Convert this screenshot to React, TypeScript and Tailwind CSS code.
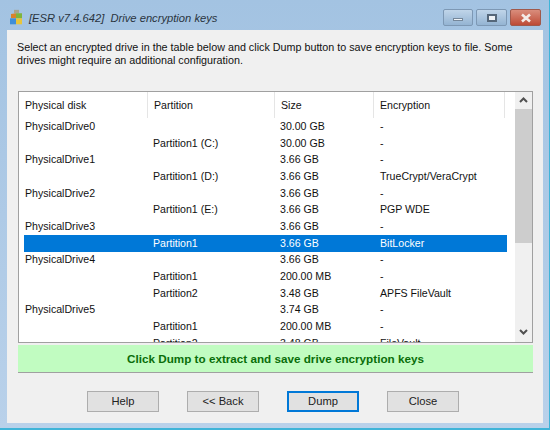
const rows = [
  ["PhysicalDrive0", "", "30.00 GB", "-"],
  ["", "Partition1 (C:)", "30.00 GB", "-"],
  ["PhysicalDrive1", "", "3.66 GB", "-"],
  ["", "Partition1 (D:)", "3.66 GB", "TrueCrypt/VeraCrypt"],
  ["PhysicalDrive2", "", "3.66 GB", "-"],
  ["", "Partition1 (E:)", "3.66 GB", "PGP WDE"],
  ["PhysicalDrive3", "", "3.66 GB", "-"],
  ["", "Partition1", "3.66 GB", "BitLocker"],
  ["PhysicalDrive4", "", "3.66 GB", "-"],
  ["", "Partition1", "200.00 MB", "-"],
  ["", "Partition2", "3.48 GB", "APFS FileVault"],
  ["PhysicalDrive5", "", "3.74 GB", "-"],
  ["", "Partition1", "200.00 MB", "-"],
  ["", "Partition2", "3.48 GB", "FileVault"],
]

const columns = ["w-[129px]", "w-[127px]", "w-[99px]", "w-[131px]"]
const headers = ["Physical disk", "Partition", "Size", "Encryption"]

function AppIcon() {
  return (
    <svg width="13" height="17" viewBox="0 0 13 20" preserveAspectRatio="none" className="mr-[6px] mt-[5px] shrink-0">
      <path d="M4 1 L9 1 L9 5 L4 5 Z" fill="#a9a48c" />
      <path d="M1 6 L6 5 L6 11 L1 11 Z" fill="#d9832b" />
      <path d="M6 5 L12 5 L12 11 L6 11 Z" fill="#7fb53c" />
      <path d="M0 11 L6 11 L6 18 L0 18 Z" fill="#3f8fd8" />
      <path d="M6 11 L12 11 L12 18 L6 18 Z" fill="#e8c53a" />
    </svg>
  )
}

function WindowButtons() {
  return (
    <div className="flex self-start gap-[3px]">
      <div className="w-[30px] h-[17px] mt-[9px] flex items-end justify-center pb-[4px] rounded-[2px] border border-[#7d98b4] bg-gradient-to-b from-[#c0d5e9] to-[#94b4d3]">
        <div className="w-[10px] h-[3px] bg-[#eef2f6] border border-[#75879a]" />
      </div>
      <div className="w-[31px] h-[17px] mt-[9px] flex items-center justify-center rounded-[2px] border border-[#7d98b4] bg-gradient-to-b from-[#c0d5e9] to-[#94b4d3]">
        <div className="w-[10px] h-[8px] bg-[#eef2f6] border-2 border-[#55677a]" />
      </div>
      <div className="w-[31px] h-[17px] mt-[9px] flex items-center justify-center rounded-[2px] border border-[#a0594b] bg-gradient-to-b from-[#d98d7c] to-[#bd4a36]">
        <svg width="12" height="10" viewBox="0 0 12 10">
          <path d="M2 1.5 L10 8.5 M10 1.5 L2 8.5" stroke="#f4ece8" strokeWidth="2.6" />
        </svg>
      </div>
    </div>
  )
}

function DialogButton({ label, active }: { label: string; active?: boolean }) {
  return (
    <button
      className={`w-[72px] h-[21px] text-[11.2px] text-[#222] bg-[#e1e1e1] border ${active ? "border-2 border-[#0078d7]" : "border-[#adadad]"}`}
    >
      {label}
    </button>
  )
}

export default function App() {
  return (
    <div
      className="w-[550px] h-[430px] flex flex-col overflow-hidden bg-gradient-to-b from-[#a3c3e2] to-[#b9d1ea] text-[#111] border-r border-b-2 border-[#3fb4d8]"
      style={{ fontFamily: '"Liberation Sans", Arial, sans-serif' }}
    >
      <div className="h-[30px] flex items-center shrink-0 pl-[10px] pr-[8px]">
        <AppIcon />
        <div className="flex-1 mt-[6px] text-[11.2px] italic text-[#2a3440] whitespace-pre">[ESR v7.4.642]  Drive encryption keys</div>
        <WindowButtons />
      </div>

      <div className="mx-[7px] w-[536px] h-[393px] shrink-0 bg-[#f0f0f0] flex flex-col text-[10.6px]">
        <p className="pl-[10px] pr-[20px] pt-[11px] leading-[13px] h-[61px] shrink-0 text-[10.75px]">
          Select an encrypted drive in the table below and click Dump button to save encryption keys to file. Some drives might require an additional configuration.
        </p>

        <div className="mx-[11px] w-[515px] h-[252px] shrink-0 flex bg-white border border-[#a0a0a0] overflow-hidden">
          <div className="w-[489px] shrink-0 overflow-hidden">
            <div className="flex h-[26px] items-center">
              {headers.map((h, i) => (
                <div key={h} className={`${columns[i]} shrink-0 h-full flex items-center pl-[6px] pt-[1px] border-r border-[#e5e5e5]`}>
                  {h}
                </div>
              ))}
            </div>
            <div className="pl-[5px] pr-[1px]">
              {rows.map((r, i) => (
                <div key={i} className={`flex h-[16.7px] pt-[1px] items-center ${i === 7 ? "bg-[#0078d7] text-white" : ""}`}>
                  <div className="w-[124px] shrink-0 pl-[1px]">{r[0]}</div>
                  <div className="w-[127px] shrink-0 pl-[5px]">{r[1]}</div>
                  <div className="w-[100px] shrink-0 pl-[5px]">{r[2]}</div>
                  <div className="flex-1 pl-[5px]">{r[3]}</div>
                </div>
              ))}
            </div>
          </div>
          <div className="ml-[7px] w-[17px] bg-[#f0f0f0] flex flex-col items-center">
            <svg width="17" height="17" viewBox="0 0 17 17" className="shrink-0">
              <path d="M5 10 L8.5 6.5 L12 10" stroke="#505050" strokeWidth="2" fill="none" />
            </svg>
            <div className="w-full h-[134px] bg-[#cdcdcd]" />
            <div className="flex-1" />
            <svg width="17" height="17" viewBox="0 0 17 17" className="shrink-0 mb-[2px]">
              <path d="M5 7 L8.5 10.5 L12 7" stroke="#505050" strokeWidth="2" fill="none" />
            </svg>
          </div>
        </div>

        <div className="mx-[11px] w-[515px] h-[28px] mt-[2px] shrink-0 flex items-center justify-center bg-[#c1fcc1] border-b border-[#a0a0a0] font-bold text-[#0a6e0a] text-[11.7px]">
          Click Dump to extract and save drive encryption keys
        </div>

        <div className="flex pl-[80px] gap-[28px] pt-[18px]">
          <DialogButton label="Help" />
          <DialogButton label="<< Back" />
          <DialogButton label="Dump" active />
          <DialogButton label="Close" />
        </div>
      </div>
    </div>
  )
}
